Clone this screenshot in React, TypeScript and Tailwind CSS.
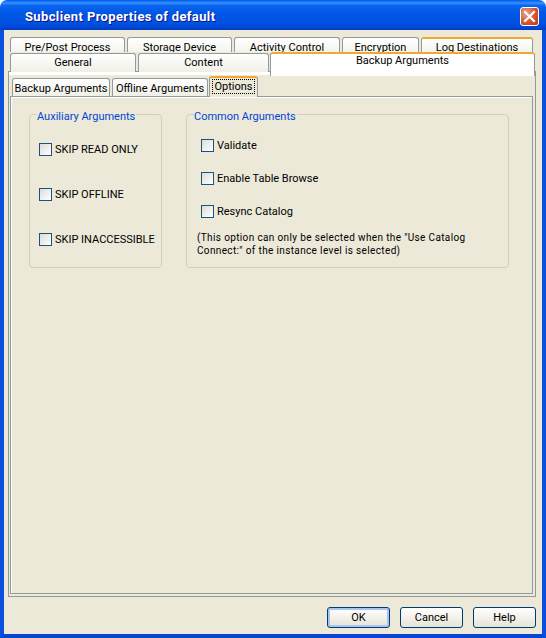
import React from 'react';

const font = "[font-family:Roboto,sans-serif]";

function TopTab({ label, width, hot }: { label: string; width: string; hot?: boolean }) {
  return (
    <div className={`${width} h-[20px] shrink-0 rounded-t-[3px] border border-b-0 border-[#919b9c] bg-gradient-to-b from-white to-[#f0efe6] text-center text-[11px] text-black ${hot ? 'border-t-2 border-t-[#f0a92e] leading-[17px]' : 'leading-[19px]'}`}>
      {label}
    </div>
  );
}

function Check({ label, className }: { label: string; className?: string }) {
  return (
    <div className={`flex items-center gap-[3px] h-[13px] ${className ?? ''}`}>
      <span className="w-[13px] h-[13px] shrink-0 border border-[#1c5180] bg-gradient-to-br from-[#dcdcd7] to-white" />
      <span className="text-[11px] leading-[13px] text-black whitespace-nowrap">{label}</span>
    </div>
  );
}

function Group({ title, width, className, children }: { title: string; width: string; className?: string; children: React.ReactNode }) {
  return (
    <div className={`relative ${width} h-[154px] rounded-[4px] border border-[#d0d0bf] ${className ?? ''}`}>
      <span className="absolute left-[7px] top-[-5px] bg-[#ece9d8] pr-px text-[11px] leading-[13px] text-[#0046d5]">{title}</span>
      {children}
    </div>
  );
}

function DlgButton({ label, main }: { label: string; main?: boolean }) {
  return (
    <div className={`w-[63px] h-[21px] rounded-[3px] border border-[#003c74] bg-gradient-to-b from-white to-[#e6e3d6] text-center text-[11px] leading-[19px] text-black ${main ? 'shadow-[inset_0_0_0_2px_#a9c4ee]' : ''}`}>
      {label}
    </div>
  );
}

export default function App() {
  return (
    <div className={`w-[546px] h-[638px] flex flex-col overflow-hidden bg-white ${font}`}>
      {/* Title bar */}
      <div className="h-[30px] shrink-0 flex items-start justify-between rounded-t-[7px] pt-[7px] pl-[25px] pr-[7px] bg-[linear-gradient(180deg,#0058ee_0%,#3593ff_10%,#0a66f0_18%,#0055e5_45%,#0053e1_75%,#0046d5_92%,#003dc0_100%)]">
        <span className="text-[13px] leading-[20px] font-bold tracking-[0.37px] text-white [text-shadow:1px_1px_#0f1089]">Subclient Properties of default</span>
        <div className="w-[19px] h-[19px] flex items-center justify-center rounded-[3px] border border-white bg-[radial-gradient(circle_at_30%_30%,#e8a08a,#d2502c_60%,#b83a18)]">
          <svg width="13" height="13" viewBox="0 0 13 13">
            <path d="M2 2 L11 11 M11 2 L2 11" stroke="white" strokeWidth="2.2" strokeLinecap="square" />
          </svg>
        </div>
      </div>

      {/* Window body */}
      <div className="flex-1 flex flex-col border-x-4 border-b-4 border-x-[#0a50dc] border-b-[#0a44d4] bg-[#ece9d8] pt-[7px] pl-[4px] pr-[6px]">
        <div className="flex gap-[2px] h-[15px] overflow-hidden ml-[2px]">
          <TopTab label="Pre/Post Process" width="w-[115px]" />
          <TopTab label="Storage Device" width="w-[105px]" />
          <TopTab label="Activity Control" width="w-[106px]" />
          <TopTab label="Encryption" width="w-[77px]" />
          <TopTab label="Log Destinations" width="w-[112px]" hot />
        </div>
        <div className="relative z-10 flex gap-[2px] h-[19px] ml-[2px] items-start">
          <div className="w-[126px] h-[19px] mt-px rounded-t-[3px] border border-b-0 border-[#919b9c] bg-gradient-to-b from-white to-[#f0efe6] text-center text-[11px] leading-[18px] text-black">General</div>
          <div className="w-[131px] h-[19px] mt-px rounded-t-[3px] border border-b-0 border-[#919b9c] bg-gradient-to-b from-white to-[#f0efe6] text-center text-[11px] leading-[18px] text-black">Content</div>
          <div className="w-[265px] h-[24px] -ml-px rounded-t-[3px] border-x border-x-[#919b9c] border-t-2 border-t-[#f0a92e] bg-white text-center text-[11px] leading-[14px] text-black">Backup Arguments</div>
        </div>

        {/* Outer tab panel */}
        <div className="w-[528px] h-[526px] flex flex-col border border-[#919b9c] bg-[#ece9d8] pl-px pr-[2px] pb-[2px]">
          <div className="h-[3px] shrink-0 -ml-px -mr-[2px] bg-white" />
          <div className="flex items-end h-[21px] shrink-0 pl-[2px]">
            <div className="w-[98px] h-[18px] rounded-t-[3px] border border-b-0 border-[#919b9c] bg-gradient-to-b from-white to-[#f0efe6] text-center text-[11px] leading-[19px] text-black">Backup Arguments</div>
            <div className="w-[96px] h-[18px] ml-[2px] rounded-t-[3px] border border-b-0 border-[#919b9c] bg-gradient-to-b from-white to-[#f0efe6] text-center text-[11px] leading-[19px] text-black">Offline Arguments</div>
            <div className="relative z-10 w-[49px] h-[21px] ml-px -mb-px rounded-t-[3px] border-x border-x-[#919b9c] border-t-2 border-t-[#f0a92e] bg-[#ece9d8] px-[2px] pt-px">
              <div className="h-[15px] border border-dotted border-black text-center text-[11px] leading-[13px] text-black">Options</div>
            </div>
          </div>

          {/* Inner tab panel */}
          <div className="flex-1 flex items-start gap-[24px] border border-[#919b9c] pt-[17px] pl-[18px] shadow-[inset_1px_1px_white]">
            <Group title="Auxiliary Arguments" width="w-[133px]">
              <Check label="SKIP READ ONLY" className="absolute left-[9px] top-[28px]" />
              <Check label="SKIP OFFLINE" className="absolute left-[9px] top-[73px]" />
              <Check label="SKIP INACCESSIBLE" className="absolute left-[9px] top-[118px]" />
            </Group>
            <Group title="Common Arguments" width="w-[323px]">
              <div className="flex flex-col gap-[20px] pt-[24px] pl-[14px]">
                <Check label="Validate" />
                <Check label="Enable Table Browse" />
                <Check label="Resync Catalog" />
              </div>
              <p className="pt-[13px] pl-[10px] text-[10px] leading-[13px] tracking-[0.36px] text-black">
                (This option can only be selected when the "Use Catalog<br />Connect:" of the instance level is selected)
              </p>
            </Group>
          </div>
        </div>

        {/* Dialog buttons */}
        <div className="flex justify-end gap-[10px] pt-[10px]">
          <DlgButton label="OK" main />
          <DlgButton label="Cancel" />
          <DlgButton label="Help" />
        </div>
      </div>
    </div>
  );
}
